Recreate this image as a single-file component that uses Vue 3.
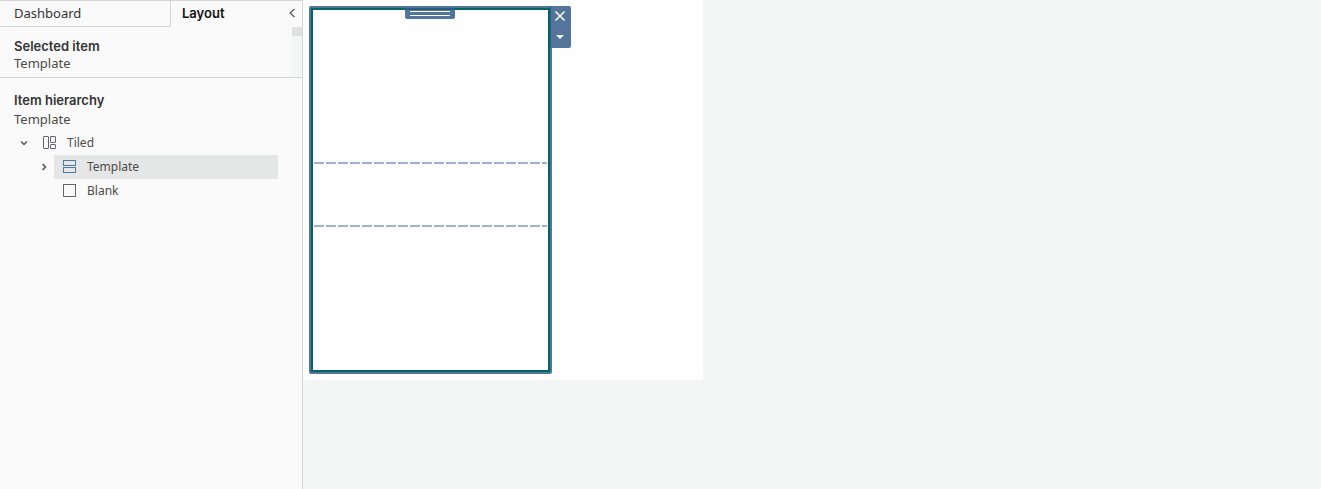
<template>
  <div class="workspace">
    <aside class="sidebar">
      <div class="tabs">
        <button
          v-for="tab in tabs"
          :key="tab"
          type="button"
          class="tab"
          :class="{ active: tab === activeTab }"
          @click="activeTab = tab"
        >{{ tab }}</button>
        <button type="button" class="collapse" aria-label="Collapse pane">
          <svg width="8" height="10" viewBox="0 0 8 10">
            <path d="M6.5 1 L2 5 L6.5 9" />
          </svg>
        </button>
      </div>

      <section class="selected-item">
        <h2>Selected item</h2>
        <p>Template</p>
        <div class="scrollbar"><span class="thumb"></span></div>
      </section>

      <section class="hierarchy">
        <h2>Item hierarchy</h2>
        <p>Template</p>
        <ul class="tree">
          <li
            v-for="item in items"
            :key="item.name"
            class="row"
            :class="{ nested: item.nested, selected: item.name === selected }"
          >
            <span class="toggle">
              <button v-if="item.icon !== 'blank'" type="button" :aria-label="'Toggle ' + item.name">
                <svg width="8" height="8" viewBox="0 0 8 8">
                  <path v-if="item.open" d="M1 2.5 L4 5.5 L7 2.5" />
                  <path v-else d="M2.5 1 L5.5 4 L2.5 7" />
                </svg>
              </button>
            </span>
            <button type="button" class="item" @click="selected = item.name">
              <svg class="icon" :class="item.icon" width="13" height="13" viewBox="0 0 13 13">
                <template v-if="item.icon === 'tiled'">
                  <rect x="0.5" y="0.5" width="5" height="12" rx="0.5" />
                  <rect x="7.5" y="0.5" width="5" height="6" rx="0.5" />
                  <rect x="7.5" y="8.5" width="5" height="4" rx="0.5" />
                </template>
                <template v-else-if="item.icon === 'vertical'">
                  <rect x="0.5" y="0.5" width="12" height="5" />
                  <rect x="0.5" y="7.5" width="12" height="5" />
                </template>
                <rect v-else x="0.5" y="0.5" width="12" height="12" />
              </svg>
              {{ item.name }}
            </button>
          </li>
        </ul>
      </section>
    </aside>

    <main class="stage">
      <div class="canvas">
        <div class="container">
          <div class="slot top"></div>
          <div class="slot middle"></div>
          <div class="slot bottom"></div>
          <button type="button" class="grip" aria-label="Move container"></button>
          <div class="actions">
            <button type="button" aria-label="Remove">
              <svg width="12" height="12" viewBox="0 0 12 12">
                <path d="M1.5 1.5 L10.5 10.5 M10.5 1.5 L1.5 10.5" stroke="#fff" stroke-width="1.5" />
              </svg>
            </button>
            <button type="button" aria-label="More options">
              <svg width="8" height="4" viewBox="0 0 8 4">
                <path d="M0 0 H8 L4 4 Z" fill="#fff" />
              </svg>
            </button>
          </div>
        </div>
      </div>
    </main>
  </div>
</template>

<script setup>
import { ref } from 'vue'

const tabs = ['Dashboard', 'Layout']
const activeTab = ref('Layout')
const selected = ref('Template')

const items = [
  { name: 'Tiled', icon: 'tiled', open: true, nested: false },
  { name: 'Template', icon: 'vertical', open: false, nested: true },
  { name: 'Blank', icon: 'blank', open: false, nested: true }
]
</script>

<style>
body {
  margin: 0;
}
</style>

<style scoped>
.workspace {
  display: flex;
  min-height: 100vh;
  background: #f4f6f5;
  color: #4b4b4b;
  font-family: 'Noto Sans', 'Open Sans', sans-serif;
  font-size: 13px;
}

button {
  padding: 0;
  border: 0;
  background: none;
  color: inherit;
  font: inherit;
  cursor: pointer;
}

svg {
  display: block;
  fill: none;
}

.sidebar {
  box-sizing: border-box;
  flex: none;
  width: 303px;
  border-right: 1px solid #d4d4d4;
  background: #fafafa;
}

.tabs {
  display: flex;
  box-sizing: border-box;
  height: 27px;
  border-top: 1px solid #d4d4d4;
}

.tab {
  box-sizing: border-box;
  width: 171px;
  padding: 0 0 2px 14px;
  border-right: 1px solid #d4d4d4;
  border-bottom: 1px solid #d4d4d4;
  color: #333;
  text-align: left;
}

.tab.active {
  flex: 1;
  padding-left: 11px;
  border: 0;
  color: #111;
  font-family: Inter, sans-serif;
  font-weight: 600;
}

.collapse {
  display: flex;
  align-items: center;
  justify-content: center;
  width: 20px;
  padding: 0 1px 2px 0;
}

.collapse path {
  stroke: #555;
  stroke-width: 1.2;
}

.selected-item {
  position: relative;
  box-sizing: border-box;
  height: 51px;
  padding: 11px 14px 0;
  border-bottom: 1px solid #d4d4d4;
}

h2 {
  margin: 0;
  color: #333;
  font-family: Inter, sans-serif;
  font-size: 13px;
  font-weight: 600;
  line-height: 17px;
}

p {
  margin: 0;
  line-height: 17px;
}

.scrollbar {
  position: absolute;
  top: 0;
  right: 0;
  bottom: 0;
  width: 10px;
  background: #f4f6f5;
}

.thumb {
  display: block;
  height: 9px;
  background: #e1e1e1;
}

.hierarchy {
  padding: 14px 24px 0 0;
}

.hierarchy h2,
.hierarchy p {
  padding-left: 14px;
}

.hierarchy p {
  padding-top: 2px;
}

.tree {
  margin: 3px 0 0;
  padding: 0;
  font-size: 12px;
  list-style: none;
}

.row {
  display: flex;
  height: 24px;
  padding-left: 14px;
}

.row.nested {
  padding-left: 34px;
}

.toggle {
  display: flex;
  align-items: center;
  justify-content: center;
  width: 20px;
}

.toggle path {
  stroke: #555;
  stroke-width: 1.5;
}

.item {
  display: flex;
  flex: 1;
  gap: 11px;
  align-items: center;
  padding: 0 0 1px 9px;
}

.row.selected .item {
  background: #e5e7e6;
}

.icon {
  stroke: #66636c;
}

.icon.vertical {
  stroke: #4e79a0;
}

.stage {
  flex: 1;
}

.canvas {
  box-sizing: border-box;
  width: 400px;
  padding: 6px;
  background: #fefefe;
}

.container {
  position: relative;
  box-sizing: border-box;
  width: 243px;
  padding: 0 3px;
  border: 2px solid #537599;
  border-radius: 2px;
  box-shadow: inset 0 0 0 2px #00665f;
}

.slot.top {
  height: 154px;
}

.slot.middle {
  height: 63px;
}

.slot.bottom {
  height: 147px;
}

/* dashed divider between neighbouring slots */
.slot + .slot {
  background: repeating-linear-gradient(90deg, #a0b1d4 0 10px, transparent 10px 12px) top / 100% 2px no-repeat;
}

.grip {
  position: absolute;
  top: 0;
  left: 94px;
  width: 50px;
  height: 11px;
  border-radius: 0 0 2px 2px;
  background:
    linear-gradient(#fff, #fff) center 3px / 40px 1px no-repeat,
    linear-gradient(#fff, #fff) center 7px / 40px 1px no-repeat,
    linear-gradient(#285d80, #285d80) top / 100% 2px no-repeat,
    #537599;
}

.actions {
  position: absolute;
  top: -2px;
  left: 100%;
  width: 20px;
  border-left: 1px solid #34558b;
  border-radius: 0 2px 2px 0;
  background: #537599;
}

.actions button {
  display: flex;
  align-items: center;
  justify-content: center;
  width: 100%;
  height: 21px;
  padding: 0 2px 1px 0;
}
</style>
